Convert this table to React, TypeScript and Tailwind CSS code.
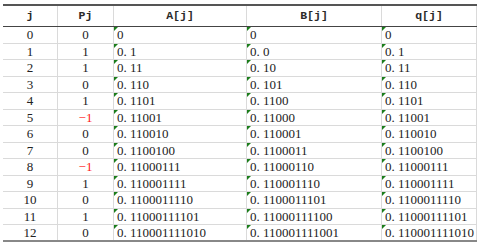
import React from 'react';

const rows: [string, string, string, string, string][] = [
  ['0', '0', '0', '0', '0'],
  ['1', '1', '0. 1', '0. 0', '0. 1'],
  ['2', '1', '0. 11', '0. 10', '0. 11'],
  ['3', '0', '0. 110', '0. 101', '0. 110'],
  ['4', '1', '0. 1101', '0. 1100', '0. 1101'],
  ['5', '−1', '0. 11001', '0. 11000', '0. 11001'],
  ['6', '0', '0. 110010', '0. 110001', '0. 110010'],
  ['7', '0', '0. 1100100', '0. 1100011', '0. 1100100'],
  ['8', '−1', '0. 11000111', '0. 11000110', '0. 11000111'],
  ['9', '1', '0. 110001111', '0. 110001110', '0. 110001111'],
  ['10', '0', '0. 1100011110', '0. 1100011101', '0. 1100011110'],
  ['11', '1', '0. 11000111101', '0. 11000111100', '0. 11000111101'],
  ['12', '0', '0. 110001111010', '0. 110001111001', '0. 110001111010'],
];

const cols = 'grid grid-cols-[55px_56px_133px_135px_95px]';

function TextCell({ value }: { value: string }) {
  return (
    <div className="relative flex items-center pl-[3px] border-r border-[#dadada]">
      <span className="absolute left-0 top-0 w-0 h-0 border-t-[4px] border-r-[4px] border-t-[#1b7d1b] border-r-transparent" />
      {value}
    </div>
  );
}

export default function App() {
  return (
    <div className="w-[480px] h-[248px] bg-white pt-[4px] overflow-hidden">
      <div className="ml-[3px] w-[474px] border-t-2 border-[#555]">
        <div className={`${cols} h-[21px] border-b border-[#444] font-['Liberation_Mono',monospace] text-[11.5px] font-bold text-[#2a2a2a]`}>
          {['j', 'Pj', 'A[j]', 'B[j]', 'q[j]'].map((h) => (
            <div key={h} className="flex items-center justify-center border-r border-[#dadada]">
              {h}
            </div>
          ))}
        </div>
        {rows.map((r, i) => (
          <div
            key={r[0]}
            className={`${cols} h-[16.5px] font-['Liberation_Serif','Times_New_Roman',serif] text-[13px] leading-none text-[#222] ${
              i === rows.length - 1 ? 'border-b-2 border-[#888]' : 'border-b border-[#dadada]'
            }`}
          >
            <div className="flex items-center justify-center border-r border-[#dadada]">{r[0]}</div>
            <div
              className={`flex items-center justify-center border-r border-[#dadada] ${
                r[1] === '−1' ? 'text-[#ff2020]' : ''
              }`}
            >
              {r[1]}
            </div>
            <TextCell value={r[2]} />
            <TextCell value={r[3]} />
            <TextCell value={r[4]} />
          </div>
        ))}
      </div>
    </div>
  );
}
